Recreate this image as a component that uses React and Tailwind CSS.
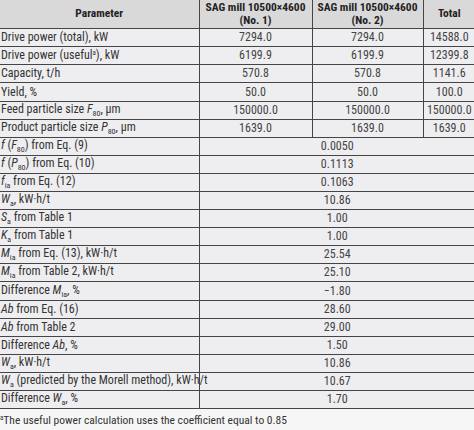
import React from "react";

const Sub = ({ children }) => (
  <span className="align-[-3px] text-[8px] leading-none">{children}</span>
);
const Sup = ({ children }) => (
  <span className="align-[4px] text-[7px] leading-none">{children}</span>
);
const I = ({ children }) => <i className="italic">{children}</i>;

const top = [
  [<>Drive power (total), kW</>, "7294.0", "7294.0", "14588.0"],
  [<>Drive power (useful<Sup>a</Sup>), kW</>, "6199.9", "6199.9", "12399.8"],
  [<>Capacity, t/h</>, "570.8", "570.8", "1141.6"],
  [<>Yield, %</>, "50.0", "50.0", "100.0"],
  [<>Feed particle size <I>F</I><Sub>80</Sub>, µm</>, "150000.0", "150000.0", "150000.0"],
  [<>Product particle size <I>P</I><Sub>80</Sub>, µm</>, "1639.0", "1639.0", "1639.0"],
];

const merged = [
  [<><I>f</I> (<I>F</I><Sub>80</Sub>) from Eq. (9)</>, "0.0050"],
  [<><I>f</I> (<I>P</I><Sub>80</Sub>) from Eq. (10)</>, "0.1113"],
  [<><I>f</I><Sub>ia</Sub> from Eq. (12)</>, "0.1063"],
  [<><I>W</I><Sub>a</Sub>, kW·h/t</>, "10.86"],
  [<><I>S</I><Sub>a</Sub> from Table 1</>, "1.00"],
  [<><I>K</I><Sub>a</Sub> from Table 1</>, "1.00"],
  [<><I>M</I><Sub>ia</Sub> from Eq. (13), kW·h/t</>, "25.54"],
  [<><I>M</I><Sub>ia</Sub> from Table 2, kW·h/t</>, "25.10"],
  [<>Difference <I>M</I><Sub>ia</Sub>, %</>, "−1.80"],
  [<><I>Ab</I> from Eq. (16)</>, "28.60"],
  [<><I>Ab</I> from Table 2</>, "29.00"],
  [<>Difference <I>Ab</I>, %</>, "1.50"],
  [<><I>W</I><Sub>a</Sub>, kW·h/t</>, "10.86"],
  [<><I>W</I><Sub>a</Sub> (predicted by the Morell method), kW·h/t</>, "10.67"],
  [<>Difference <I>W</I><Sub>a</Sub>, %</>, "1.70"],
];

const line = "border-[#454545]";

export default function App() {
  return (
    <div className="w-[474px] h-[430px] overflow-hidden bg-[#f6f6f6] text-[#333] font-['Roboto',sans-serif] font-stretch-condensed">
      <table className="table-fixed border-collapse w-[475px] bg-[#eeeef0]">
        <colgroup>
          <col className="w-[199px]" />
          <col className="w-[113px]" />
          <col className="w-[111px]" />
          <col className="w-[52px]" />
        </colgroup>
        <thead>
          <tr className="h-[28px] bg-[#d9d9d9] text-[#222] text-[11.5px] leading-[13px]">
            <th className={`border-b border-r ${line} font-bold whitespace-nowrap p-0`}>Parameter</th>
            <th className={`border-b border-r ${line} font-bold whitespace-nowrap p-0`}>SAG mill 10500×4600<br />(No. 1)</th>
            <th className={`border-b border-r ${line} font-bold whitespace-nowrap p-0`}>SAG mill 10500×4600<br />(No. 2)</th>
            <th className={`border-b ${line} font-bold whitespace-nowrap p-0`}>Total</th>
          </tr>
        </thead>
        <tbody className="text-[12px] leading-[14px]">
          {top.map((r, i) => (
            <tr key={i} className={i === 3 ? "h-[19px]" : "h-[18px]"}>
              <td className={`border-b border-r ${line} pl-[1px] whitespace-nowrap`}>{r[0]}</td>
              <td className={`border-b border-r ${line} text-center text-[#444]`}>{r[1]}</td>
              <td className={`border-b border-r ${line} text-center text-[#444]`}>{r[2]}</td>
              <td className={`border-b ${line} text-center text-[#444] whitespace-nowrap`}>{r[3]}</td>
            </tr>
          ))}
          {merged.map((r, i) => (
            <tr key={i} className={i === 8 ? "h-[19px]" : "h-[18px]"}>
              <td className={`border-b border-r ${line} pl-[1px] whitespace-nowrap`}>{r[0]}</td>
              <td colSpan={3} className={`border-b ${line} text-center text-[#444]`}>{r[1]}</td>
            </tr>
          ))}
        </tbody>
      </table>
      <div className="pt-[4px] text-[11.5px] leading-[14px] text-[#333] whitespace-nowrap">
        <Sup>a</Sup>The useful power calculation uses the coefficient equal to 0.85
      </div>
    </div>
  );
}
